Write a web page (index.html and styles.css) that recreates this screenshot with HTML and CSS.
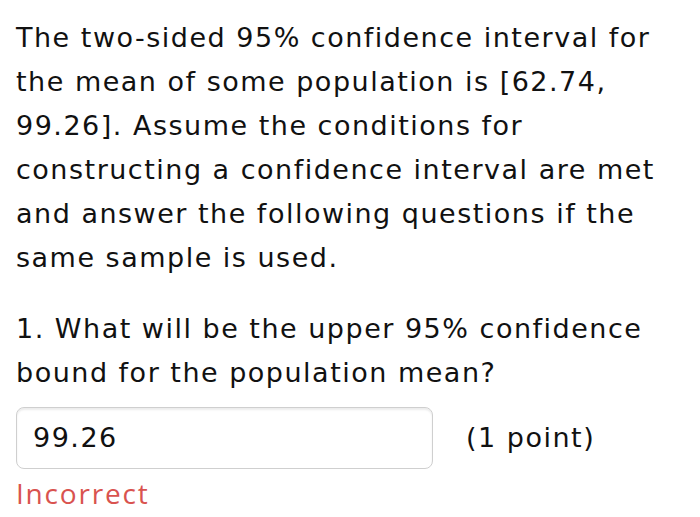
FILE: index.html
```html
<!DOCTYPE html>
<html>
<head>
<meta charset="utf-8">
<link rel="stylesheet" href="styles.css">
</head>
<body>
<div class="page">
  <p class="stem">The two-sided 95% confidence interval for the mean of some population is [62.74, 99.26]. Assume the conditions for constructing a confidence interval are met and answer the following questions if the same sample is used.</p>
  <p class="question">1. What will be the upper 95% confidence bound for the population mean?</p>
  <div class="answer-row">
    <div class="answer-box">99.26</div>
    <span class="points">(1 point)</span>
  </div>
  <div class="feedback">Incorrect</div>
</div>
</body>
</html>
```
FILE: styles.css
```css
html, body {
  margin: 0;
  padding: 0;
  background: #ffffff;
}
.page {
  padding: 16px 0 0 16px;
  width: 670px;
  font-family: "DejaVu Sans", Verdana, sans-serif;
  font-size: 27px;
  line-height: 44px;
  letter-spacing: 1.5px;
  color: #111;
}
.stem {
  margin: 0;
}
.question {
  margin: 27px 0 0 0;
}
.answer-row {
  display: flex;
  align-items: center;
  margin-top: 12px;
}
.answer-box {
  box-sizing: border-box;
  width: 417px;
  height: 62px;
  border: 1px solid #cfcfcf;
  border-radius: 8px;
  box-shadow: inset 0 2px 2px rgba(0,0,0,0.08);
  padding-left: 16px;
  display: flex;
  align-items: center;
}
.points {
  margin-left: 33px;
}
.feedback {
  font-family: "Open Sans", "Liberation Sans", sans-serif;
  color: #d9534f;
  margin-top: 4px;
  font-size: 28px;
  letter-spacing: 1.8px;
  line-height: 40px;
}
```
